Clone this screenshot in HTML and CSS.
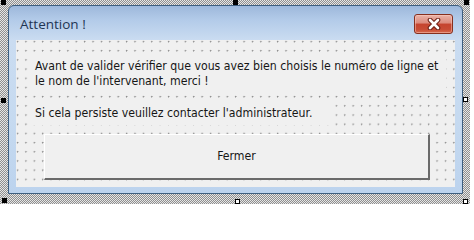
FILE: index.html
```html
<!DOCTYPE html>
<html lang="fr">
<head>
<meta charset="utf-8">
<link rel="stylesheet" href="styles.css">
</head>
<body>
<div class="selection">
  <div class="window">
    <div class="titlebar">
      <span class="title">Attention !</span>
      <div class="close">
        <svg width="14" height="12" viewBox="0 0 14 12">
          <path d="M3 2 L11 10 M11 2 L3 10" stroke="#6e2016" stroke-width="4.6" stroke-linecap="round" fill="none"/>
          <path d="M3 2 L11 10 M11 2 L3 10" stroke="#ffffff" stroke-width="2.6" stroke-linecap="round" fill="none"/>
        </svg>
      </div>
    </div>
    <div class="client">
      <p class="label first">Avant de valider vérifier que vous avez bien choisis le numéro de ligne et le nom de l'intervenant, merci !</p>
      <p class="label second">Si cela persiste veuillez contacter l'administrateur.</p>
      <div class="button">Fermer</div>
    </div>
  </div>
  <span class="handle h-tl"></span>
  <span class="handle h-tm"></span>
  <span class="handle h-tr"></span>
  <span class="handle h-ml"></span>
  <span class="handle h-mr white"></span>
  <span class="handle h-bl"></span>
  <span class="handle h-bm white"></span>
  <span class="handle h-br white"></span>
</div>
</body>
</html>
```
FILE: styles.css
```css
html, body {
  margin: 0;
  padding: 0;
  background: #ffffff;
}

.selection {
  position: relative;
  width: 470px;
  height: 204px;
  box-sizing: border-box;
  padding: 5px 0 0 8px;
  background: repeating-conic-gradient(#8f8f8f 0 25%, #e6e6e6 0 50%) 0 0 / 2px 2px;
}

.window {
  width: 455px;
  height: 189px;
  box-sizing: border-box;
  border: 1px solid #3d5f80;
  border-radius: 6px 6px 0 0;
  display: flex;
  flex-direction: column;
  padding-bottom: 6px;
  background: linear-gradient(to bottom, #9db8db 0, #b3cbe9 14px, #cadcf1 34px, #c6daf0 60%, #bcd3ee 100%);
}

.titlebar {
  height: 34px;
  flex: none;
  display: flex;
  justify-content: space-between;
  align-items: flex-start;
  padding: 0 9px 0 11px;
}

.title {
  margin-top: 9px;
  font-family: "Open Sans", "Noto Sans", sans-serif;
  font-size: 13.5px;
  line-height: 19px;
  color: #1e3553;
}

.close {
  margin-top: 8px;
  width: 39px;
  height: 20px;
  box-sizing: border-box;
  border: 1px solid #86301f;
  border-radius: 3px;
  background: linear-gradient(to bottom, #eab3a8 0, #dc8a7c 45%, #c5442f 50%, #c84c35 80%, #d66a52 100%);
  display: flex;
  align-items: center;
  justify-content: center;
  box-shadow: inset 0 0 0 1px rgba(255, 210, 200, 0.45);
}

.close svg {
  display: block;
}

.client {
  flex: 1;
  margin: 0 7px;
  padding: 15px 0 0 14px;
  background-color: #f0f0f0;
  background-image: radial-gradient(circle at 1.5px 1.5px, #8a8a8a 0.6px, rgba(138,138,138,0) 1.1px);
  background-size: 8.4px 9.2px;
  background-position: 0 0;
  font-family: "DejaVu Sans Condensed", "DejaVu Sans", sans-serif;
  font-size: 12.2px;
  line-height: 14.5px;
  color: #161616;
}

.label {
  margin: 0;
  background: #f0f0f0;
  box-sizing: border-box;
}

.first {
  width: 416px;
  height: 37px;
  padding: 4px 0 0 5px;
}

.second {
  width: 300px;
  height: 22px;
  margin-top: 11px;
  padding: 3px 0 0 5px;
}

.button {
  margin: 9px 0 0 14px;
  width: 386px;
  height: 46px;
  box-sizing: border-box;
  border-top: 1px solid #ffffff;
  border-left: 1px solid #ffffff;
  border-right: 2px solid #6a6a6a;
  border-bottom: 2px solid #6a6a6a;
  background: #f0f0f0;
  display: flex;
  align-items: center;
  justify-content: center;
  color: #161616;
}

.handle {
  position: absolute;
  width: 5px;
  height: 5px;
  box-sizing: border-box;
  background: #000000;
}

.handle.white {
  background: #ffffff;
  border: 1px solid #000000;
}

.h-tl { left: 1px; top: 0; }
.h-tm { left: 233px; top: 0; }
.h-tr { left: 464px; top: 0; }
.h-ml { left: 1px; top: 98px; }
.h-mr { left: 463px; top: 97px; }
.h-bl { left: 2px; top: 198px; }
.h-bm { left: 235px; top: 199px; }
.h-br { left: 463px; top: 199px; }
```
